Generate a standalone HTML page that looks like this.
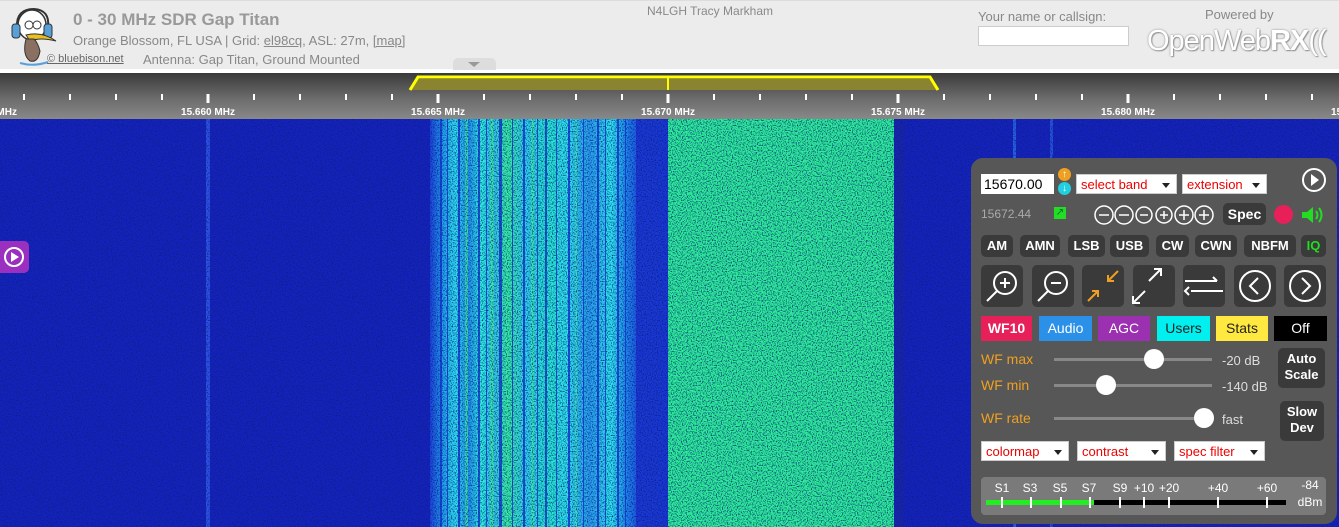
<!DOCTYPE html>
<html><head><meta charset="utf-8"><style>
*{box-sizing:border-box;margin:0;padding:0}
body{width:1339px;height:527px;overflow:hidden;position:relative;font-family:"Liberation Sans",sans-serif;background:#fff}
.hdr{position:absolute;left:0;top:0;width:1339px;height:69px;background:#ececec;border-top:1px solid #ddd}
.abs{position:absolute;white-space:nowrap}
.scale{position:absolute;left:0;top:73px;width:1339px;height:46px;background:linear-gradient(#3a3a3a,#6c6c6c 55%,#888)}
.wf{position:absolute;left:0;top:119px;width:1339px;height:408px;overflow:hidden;background:#1c22c8}
.panel{position:absolute;left:971px;top:158px;width:366px;height:366px;background:#575757;border-radius:12px}
.sel{position:absolute;background:#fff;color:#e00;font-size:13px;height:20px;padding:2px 4px;border:1px solid #ccc}
.sel:after{content:"";position:absolute;right:6px;top:8px;border:4px solid transparent;border-top:5px solid #222}
.btn{position:absolute;background:#3a3a3a;color:#fff;font-weight:bold;font-size:13px;border-radius:5px;text-align:center;line-height:22px;height:22px}
.ib{position:absolute;width:42px;height:42px;background:#3a3a3a;border-radius:5px;top:107px}
.col{position:absolute;top:158px;height:25px;font-size:14px;text-align:center;line-height:25px}
.lbl{position:absolute;color:#f0a020;font-size:14px}
.trk{position:absolute;left:83px;width:158px;height:3px;background:#888}
.knob{position:absolute;width:20px;height:20px;border-radius:50%;background:#fff}
</style></head><body>
<div class="hdr">
<svg class="abs" style="left:8px;top:4px" width="52" height="62" viewBox="0 0 52 62">
<ellipse cx="24" cy="20" rx="14" ry="15" fill="#fff" stroke="#333" stroke-width="1.5"/>
<path d="M9 22 Q8 4 26 4 Q42 5 40 22" fill="none" stroke="#333" stroke-width="2"/>
<rect x="4" y="19" width="8" height="14" rx="3" fill="#5aa0d8" stroke="#333"/>
<rect x="36" y="19" width="8" height="14" rx="3" fill="#5aa0d8" stroke="#333"/>
<circle cx="21" cy="20" r="4" fill="#fff" stroke="#333"/><circle cx="29" cy="20" r="4" fill="#fff" stroke="#333"/>
<path d="M18 30 Q34 26 48 36 Q32 32 22 36Z" fill="#e8c020" stroke="#333"/>
<path d="M18 34 Q14 50 22 56 Q30 58 32 46 Q30 38 26 34Z" fill="#8a7060" stroke="#333"/>
<path d="M12 58 Q26 62 40 57" stroke="#5aa0d8" stroke-width="2" fill="none"/>
</svg>
<div class="abs" style="left:73px;top:9px;font-size:17px;font-weight:bold;color:#999">0 - 30 MHz SDR Gap Titan</div>
<div class="abs" style="left:73px;top:32px;font-size:13px;color:#888">Orange Blossom, FL USA | Grid: <u>el98cq</u>, ASL: 27m, <u>[map]</u></div>
<div class="abs" style="left:47px;top:52px;font-size:11px;color:#666"><u>© bluebison.net</u></div>
<div class="abs" style="left:143px;top:51px;font-size:13px;color:#888">Antenna: Gap Titan, Ground Mounted</div>
<div class="abs" style="left:453px;top:57px;width:43px;height:12px;background:#ddd;border-radius:5px 5px 0 0"></div>
<div class="abs" style="left:468px;top:61px;border:6px solid transparent;border-top:5px solid #999"></div>
<div class="abs" style="left:647px;top:3px;font-size:12px;color:#888">N4LGH Tracy Markham</div>
<div class="abs" style="left:978px;top:8px;font-size:13px;color:#888">Your name or callsign:</div>
<div class="abs" style="left:978px;top:25px;width:151px;height:20px;background:#fff;border:1px solid #ccc"></div>
<div class="abs" style="left:1205px;top:6px;font-size:13px;color:#888">Powered by</div>
<div class="abs" style="left:1147px;top:24px;font-size:29px;color:#fff;text-shadow:0 0 2px #888,1px 1px 1px #999;letter-spacing:-1px">Open<span>Web</span><b>RX</b>((</div>
</div>
<div class="scale">
<svg width="1339" height="46" style="position:absolute;left:0;top:0">
<path d="M410 17 L418 6 L930 6 L938 17 Z" fill="#8a8430"/>
<path d="M410 17 L418 4 L930 4 L938 17" fill="none" stroke="#ff0" stroke-width="3"/>
<line x1="668" y1="4" x2="668" y2="17" stroke="#ff0" stroke-width="2"/>
<g stroke="#fff" stroke-width="2">
<line x1="24" y1="21" x2="24" y2="27"/><line x1="70" y1="21" x2="70" y2="27"/><line x1="116" y1="21" x2="116" y2="27"/><line x1="162" y1="21" x2="162" y2="27"/><line x1="254" y1="21" x2="254" y2="27"/><line x1="300" y1="21" x2="300" y2="27"/><line x1="346" y1="21" x2="346" y2="27"/><line x1="392" y1="21" x2="392" y2="27"/><line x1="484" y1="21" x2="484" y2="27"/><line x1="530" y1="21" x2="530" y2="27"/><line x1="576" y1="21" x2="576" y2="27"/><line x1="622" y1="21" x2="622" y2="27"/><line x1="714" y1="21" x2="714" y2="27"/><line x1="760" y1="21" x2="760" y2="27"/><line x1="806" y1="21" x2="806" y2="27"/><line x1="852" y1="21" x2="852" y2="27"/><line x1="944" y1="21" x2="944" y2="27"/><line x1="990" y1="21" x2="990" y2="27"/><line x1="1036" y1="21" x2="1036" y2="27"/><line x1="1082" y1="21" x2="1082" y2="27"/><line x1="1174" y1="21" x2="1174" y2="27"/><line x1="1220" y1="21" x2="1220" y2="27"/><line x1="1266" y1="21" x2="1266" y2="27"/><line x1="1312" y1="21" x2="1312" y2="27"/>
</g>
<g stroke="#fff" stroke-width="3"><line x1="208" y1="21" x2="208" y2="30"/><line x1="438" y1="21" x2="438" y2="30"/><line x1="668" y1="21" x2="668" y2="30"/><line x1="898" y1="21" x2="898" y2="30"/><line x1="1128" y1="21" x2="1128" y2="30"/></g>
<g fill="#fff" font-size="10" font-weight="bold" font-family="Liberation Sans" text-anchor="middle">
<text x="-10" y="42">15.655 MHz</text><text x="208" y="42">15.660 MHz</text><text x="438" y="42">15.665 MHz</text><text x="668" y="42">15.670 MHz</text><text x="898" y="42">15.675 MHz</text><text x="1128" y="42">15.680 MHz</text><text x="1358" y="42">15.685 MHz</text></g>
</svg></div>
<div class="wf">
<svg width="1339" height="408" style="position:absolute;left:0;top:0">
<defs><filter id="n" x="0" y="0" width="100%" height="100%"><feTurbulence type="fractalNoise" baseFrequency="0.8" numOctaves="1" seed="3"/><feColorMatrix values="0 0 0 0 0  0 0 0 0 0.02  0 0 0 0 0.2  0 0 0 3 -1.35"/></filter>
<linearGradient id="g1" x1="0" x2="1"><stop offset="0" stop-color="#1f40e0"/><stop offset=".06" stop-color="#22a0f0"/><stop offset=".12" stop-color="#30e0f0"/><stop offset=".18" stop-color="#2090f0"/><stop offset=".24" stop-color="#30f0e0"/><stop offset=".3" stop-color="#30c8f0"/><stop offset=".36" stop-color="#38f0a0"/><stop offset=".45" stop-color="#30d0f0"/><stop offset=".55" stop-color="#28e8d0"/><stop offset=".65" stop-color="#30e0f0"/><stop offset=".75" stop-color="#2a9cf0"/><stop offset=".85" stop-color="#30e8f0"/><stop offset=".93" stop-color="#2080f0"/><stop offset="1" stop-color="#2040e0"/></linearGradient></defs>
<rect width="1339" height="408" fill="#1820c0"/>
<rect x="430" width="213" height="408" fill="url(#g1)"/>
<g fill="#1830d8" opacity=".8"><rect x="440" width="2" height="408"/><rect x="447" width="1" height="408"/><rect x="458" width="2" height="408"/><rect x="478" width="2" height="408"/><rect x="486" width="1" height="408"/><rect x="499" width="3" height="408"/><rect x="512" width="1" height="408"/><rect x="523" width="2" height="408"/><rect x="537" width="1" height="408"/><rect x="545" width="2" height="408"/><rect x="556" width="1" height="408"/><rect x="568" width="2" height="408"/><rect x="583" width="1" height="408"/><rect x="597" width="2" height="408"/><rect x="605" width="1" height="408"/><rect x="617" width="2" height="408"/><rect x="625" width="1" height="408"/></g>
<g fill="#40f0a0" opacity=".7"><rect x="465" width="3" height="408"/><rect x="490" width="4" height="408"/><rect x="531" width="3" height="408"/><rect x="575" width="2" height="408"/></g>
<rect x="636" width="32" height="408" fill="#1c36d8"/>
<rect x="668" width="226" height="408" fill="#30ee98"/>
<rect x="894" width="10" height="408" fill="#1c22b0"/>
<rect x="206" width="4" height="408" fill="#3050e8"/>
<rect x="1013" width="3" height="408" fill="#2a60e8"/>
<rect x="1050" width="3" height="408" fill="#2850e0"/>
<rect width="1339" height="408" filter="url(#n)"/>
</svg>
<div class="abs" style="left:0;top:122px;width:29px;height:32px;background:#9b30c0;border-radius:0 5px 5px 0"></div>
<svg class="abs" style="left:3px;top:127px" width="22" height="22"><circle cx="11" cy="11" r="9" fill="none" stroke="#fff" stroke-width="2"/><path d="M8 6 L16 11 L8 16Z" fill="#fff"/></svg>
</div>
<div class="panel">
<div class="abs" style="left:10px;top:16px;width:73px;height:20px;background:#fff;font-size:14px;padding:2px 3px;color:#000">15670.00</div>
<div class="abs" style="left:87px;top:10px;width:13px;height:13px;border-radius:50%;background:#f0a020;color:#fff;font-size:10px;text-align:center;line-height:13px">↑</div>
<div class="abs" style="left:87px;top:24px;width:13px;height:13px;border-radius:50%;background:#20d0e0;color:#fff;font-size:10px;text-align:center;line-height:13px">↓</div>
<div class="sel" style="left:105px;top:16px;width:101px">select band</div>
<div class="sel" style="left:211px;top:16px;width:85px">extension</div>
<svg class="abs" style="left:330px;top:9px" width="26" height="26"><circle cx="13" cy="13" r="11" fill="none" stroke="#fff" stroke-width="2"/><path d="M10 7 L18 13 L10 19Z" fill="#fff"/></svg>
<div class="abs" style="left:10px;top:49px;font-size:12px;color:#aaa">15672.44</div>
<div class="abs" style="left:83px;top:49px;width:12px;height:12px;background:#2d2;color:#064;font-size:10px;line-height:12px;text-align:center">↗</div>
<svg class="abs" style="left:123px;top:46px" width="124" height="22" fill="none" stroke="#fff" stroke-width="1.5">
<circle cx="10" cy="11" r="9"/><path d="M5 11h10"/><circle cx="30" cy="11" r="9"/><path d="M25 11h10"/><circle cx="50" cy="11" r="8"/><path d="M46 11h8"/><circle cx="70" cy="11" r="8"/><path d="M66 11h8M70 7v8"/><circle cx="90" cy="11" r="9"/><path d="M85 11h10M90 6v10"/><circle cx="110" cy="11" r="9"/><path d="M105 11h10M110 6v10"/></svg>
<div class="btn" style="left:252px;top:45px;width:43px;font-size:14px">Spec</div>
<div class="abs" style="left:303px;top:47px;width:19px;height:19px;border-radius:50%;background:#e8205a"></div>
<svg class="abs" style="left:329px;top:46px" width="26" height="22"><path d="M2 8h5l6-5v16l-6-5H2Z" fill="#2d2"/><path d="M16 7q3 4 0 8M19 4q5 7 0 14" stroke="#2d2" stroke-width="2" fill="none"/></svg>
<div class="btn" style="left:10px;top:77px;width:32px">AM</div>
<div class="btn" style="left:49px;top:77px;width:40px">AMN</div>
<div class="btn" style="left:97px;top:77px;width:37px">LSB</div>
<div class="btn" style="left:139px;top:77px;width:39px">USB</div>
<div class="btn" style="left:185px;top:77px;width:33px">CW</div>
<div class="btn" style="left:224px;top:77px;width:42px">CWN</div>
<div class="btn" style="left:273px;top:77px;width:52px">NBFM</div>
<div class="btn" style="left:330px;top:77px;width:25px;color:#2d2">IQ</div>
<div class="ib" style="left:10px"></div><div class="ib" style="left:61px"></div><div class="ib" style="left:111px"></div><div class="ib" style="left:162px"></div><div class="ib" style="left:212px"></div><div class="ib" style="left:263px"></div><div class="ib" style="left:313px"></div>
<svg class="abs" style="left:10px;top:107px" width="346" height="42" fill="none" stroke="#fff" stroke-width="2">
<circle cx="24" cy="18" r="11"/><path d="M16 26 L6 36M19 18h10M24 13v10"/>
<circle cx="75" cy="18" r="11"/><path d="M67 26 L57 36M70 18h10"/>
<path d="M137 6 L127 16M127 10v6h6M107 36 L117 26M117 32v-6h-6" stroke="#f0a020"/>
<path d="M168 16 L180 4M173 4h7v7M164 26 L152 38M152 31v7h7"/>
<path d="M204 16h32M232 12l4 4M210 26h32M208 22l-4 4l4 4" />
<circle cx="274" cy="21" r="15"/><path d="M277 13 L269 21 L277 29"/>
<circle cx="324" cy="21" r="15"/><path d="M321 13 L329 21 L321 29"/></svg>
<div class="col" style="left:10px;width:51px;background:#e8205a;color:#fff;font-weight:bold">WF10</div>
<div class="col" style="left:68px;width:53px;background:#2a90e8;color:#fff">Audio</div>
<div class="col" style="left:127px;width:52px;background:#9b30b0;color:#fff">AGC</div>
<div class="col" style="left:186px;width:53px;background:#00f0f0;color:#222">Users</div>
<div class="col" style="left:245px;width:52px;background:#ffe840;color:#222">Stats</div>
<div class="col" style="left:303px;width:53px;background:#000;color:#fff">Off</div>
<div class="lbl" style="left:10px;top:193px">WF max</div>
<div class="trk" style="top:200px"></div><div class="knob" style="left:173px;top:191px"></div>
<div class="abs" style="left:251px;top:195px;font-size:13px;color:#ddd">-20 dB</div>
<div class="lbl" style="left:10px;top:219px">WF min</div>
<div class="trk" style="top:226px"></div><div class="knob" style="left:125px;top:217px"></div>
<div class="abs" style="left:251px;top:221px;font-size:13px;color:#ddd">-140 dB</div>
<div class="lbl" style="left:10px;top:252px">WF rate</div>
<div class="trk" style="top:259px"></div><div class="knob" style="left:223px;top:250px"></div>
<div class="abs" style="left:251px;top:254px;font-size:13px;color:#ddd">fast</div>
<div class="btn" style="left:307px;top:190px;width:47px;height:40px;line-height:16px;padding-top:3px">Auto<br>Scale</div>
<div class="btn" style="left:309px;top:243px;width:44px;height:40px;line-height:16px;padding-top:3px">Slow<br>Dev</div>
<div class="sel" style="left:10px;top:283px;width:88px">colormap</div>
<div class="sel" style="left:106px;top:283px;width:89px">contrast</div>
<div class="sel" style="left:203px;top:283px;width:91px">spec filter</div>
<div class="abs" style="left:10px;top:319px;width:345px;height:38px;background:#7a7a7a;border-radius:4px"></div>
<svg class="abs" style="left:10px;top:319px" width="345" height="38">
<g fill="#fff" font-size="12" font-family="Liberation Sans" text-anchor="middle">
<text x="21" y="15">S1</text><text x="49" y="15">S3</text><text x="79" y="15">S5</text><text x="108" y="15">S7</text><text x="139" y="15">S9</text><text x="163" y="15">+10</text><text x="188" y="15">+20</text><text x="237" y="15">+40</text><text x="286" y="15">+60</text><text x="329" y="12">-84</text><text x="329" y="29">dBm</text></g>
<rect x="5" y="23" width="300" height="5" fill="#000"/><rect x="5" y="23" width="108" height="5" fill="#2e2"/>
<g stroke="#fff" stroke-width="2"><path d="M21 20v11M50 20v11M80 20v11M109 20v11M139 20v11M163 20v11M188 20v11M237 20v11M286 20v11"/></g></svg>
</div>
</body></html>
